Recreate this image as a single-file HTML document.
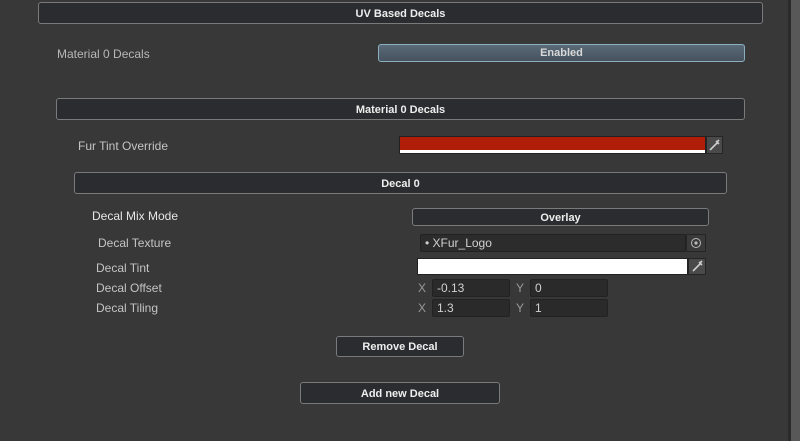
<!DOCTYPE html>
<html><head><style>
body{margin:0;width:800px;height:441px;background:#383838;overflow:hidden;position:relative;font-family:"Liberation Sans",sans-serif;font-size:12px;color:#c4c4c4}
.a{position:absolute;box-sizing:border-box}
.hdr{background:#2a2c2f;border:1px solid #7a7a7a;border-radius:3px;color:#eee;font-weight:bold;text-align:center;font-size:11px}
.lbl{position:absolute;font-size:12px}
.fld{background:#2a2a2a;border:1px solid #222;border-radius:2px;color:#d0d0d0;padding-left:4px;font-size:12px;line-height:16px}
.pick{background:#4a4a4a;border:1px solid #252525}
</style></head><body>
<div class="a" style="left:788px;top:0;width:3px;height:441px;background:#2a2a2a"></div>
<div class="a" style="left:791px;top:0;width:9px;height:441px;background:#585858"></div>

<div class="a hdr" style="left:38px;top:2px;width:725px;height:22px;line-height:22px">UV Based Decals</div>
<div class="lbl" style="left:57px;top:47px;color:#b8b8b8">Material 0 Decals</div>
<div class="a" style="left:378px;top:44px;width:367px;height:18px;border:1px solid #8ab0c0;border-radius:3px;background:linear-gradient(#5a6a78,#46525e);color:#d8d8d8;font-weight:bold;font-size:11px;text-align:center;line-height:17px">Enabled</div>

<div class="a hdr" style="left:56px;top:98px;width:689px;height:22px;line-height:22px">Material 0 Decals</div>
<div class="lbl" style="left:78px;top:139px">Fur Tint Override</div>
<div class="a" style="left:399px;top:136px;width:307px;height:18px;background:#fff;border:1px solid #222"><div style="height:13px;background:#b01d08"></div></div>
<div class="a pick" style="left:706px;top:136px;width:17px;height:18px"><svg width="15" height="16" viewBox="0 0 15 16"><path d="M3 13 L10 6 M9 4 L12 7 M10 5 L12 3" stroke="#ccc" stroke-width="1.6" fill="none"/></svg></div>

<div class="a hdr" style="left:74px;top:172px;width:653px;height:22px;line-height:22px">Decal 0</div>
<div class="lbl" style="left:92px;top:209px;color:#e6e6e6">Decal Mix Mode</div>
<div class="a hdr" style="left:412px;top:208px;width:297px;height:18px;line-height:18px">Overlay</div>
<div class="lbl" style="left:98px;top:236px">Decal Texture</div>
<div class="a fld" style="left:420px;top:234px;width:266px;height:18px;background:#2c2c2c">• XFur_Logo</div>
<div class="a pick" style="left:686px;top:234px;width:20px;height:18px;background:#3a3a3a"><svg width="18" height="16" viewBox="0 0 18 16"><circle cx="9" cy="8" r="4.5" stroke="#bbb" fill="none"/><circle cx="9" cy="8" r="1.6" fill="#bbb"/></svg></div>
<div class="lbl" style="left:96px;top:261px">Decal Tint</div>
<div class="a" style="left:417px;top:258px;width:271px;height:17px;background:#fff;border:1px solid #222"></div>
<div class="a pick" style="left:688px;top:258px;width:18px;height:17px"><svg width="16" height="15" viewBox="0 0 16 15"><path d="M4 12 L11 5 M10 3 L13 6 M11 4 L13 2" stroke="#ccc" stroke-width="1.6" fill="none"/></svg></div>
<div class="lbl" style="left:96px;top:281px">Decal Offset</div>
<div class="lbl" style="left:418px;top:281px;color:#999">X</div>
<div class="a fld" style="left:432px;top:279px;width:78px;height:18px">-0.13</div>
<div class="lbl" style="left:516px;top:281px;color:#999">Y</div>
<div class="a fld" style="left:530px;top:279px;width:78px;height:18px">0</div>
<div class="lbl" style="left:96px;top:301px">Decal Tiling</div>
<div class="lbl" style="left:418px;top:301px;color:#999">X</div>
<div class="a fld" style="left:432px;top:299px;width:78px;height:18px">1.3</div>
<div class="lbl" style="left:516px;top:301px;color:#999">Y</div>
<div class="a fld" style="left:530px;top:299px;width:78px;height:18px">1</div>

<div class="a hdr" style="left:336px;top:336px;width:128px;height:21px;line-height:21px">Remove Decal</div>
<div class="a hdr" style="left:300px;top:382px;width:200px;height:22px;line-height:22px">Add new Decal</div>
</body></html>
